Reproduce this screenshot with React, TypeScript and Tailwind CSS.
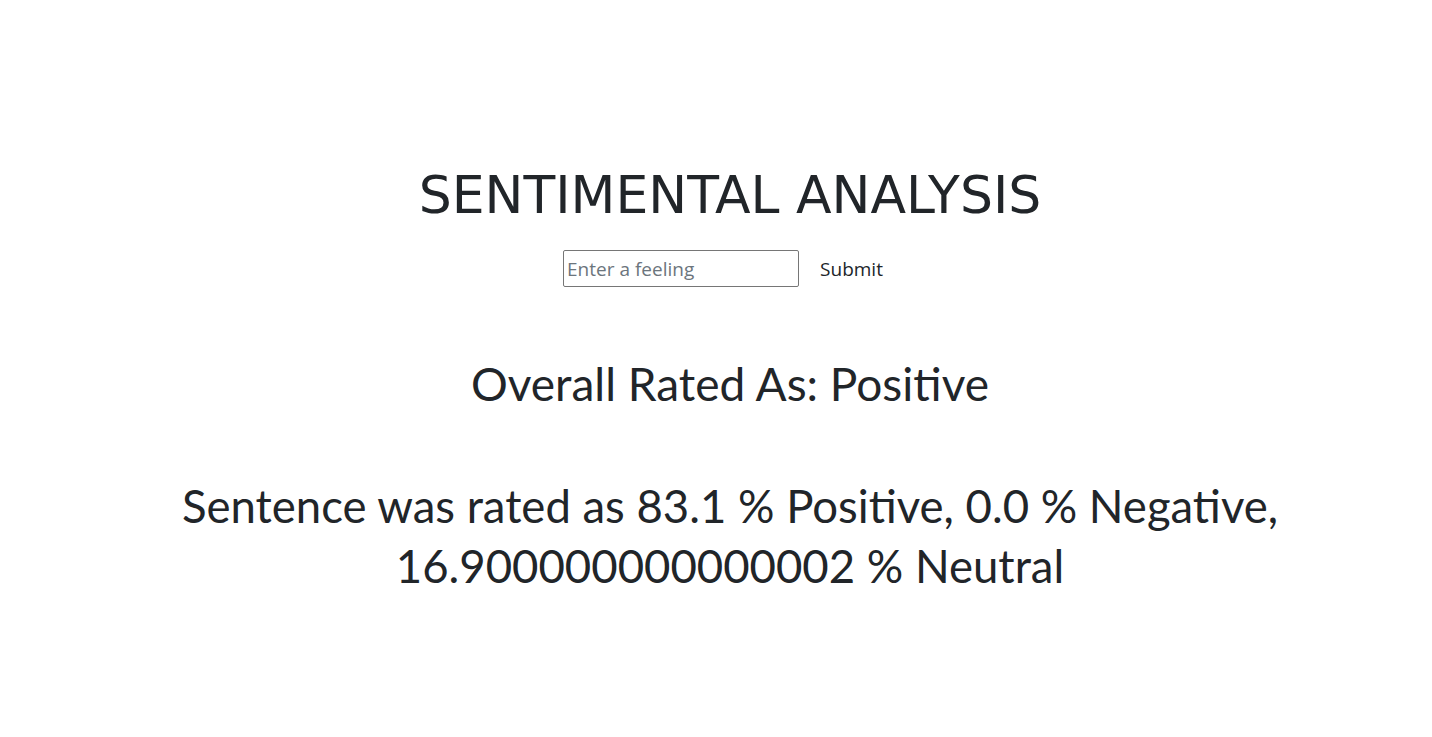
import React from "react";

const App = () => {
  return (
    <div className="min-h-screen bg-white text-[#212529] text-center pt-[164px] pl-[28px]">
      <h1 className="text-[52px] leading-[1.2] font-normal font-['Verdana','DejaVu_Sans',sans-serif]">
        SENTIMENTAL ANALYSIS
      </h1>
      <form className="flex justify-center items-center mt-[24px]" onSubmit={(e) => e.preventDefault()}>
        <input
          type="text"
          placeholder="Enter a feeling"
          className="w-[236px] h-[37px] border border-[#767676] rounded-[2px] px-[3px] text-[19px] placeholder:text-[#6c757d] outline-none font-['Open_Sans',sans-serif]"
        />
        <button
          type="submit"
          className="ml-[13px] pl-[8px] pr-[14px] text-[19px] text-[#212529] bg-transparent font-['Open_Sans',sans-serif]"
        >
          Submit
        </button>
      </form>
      <h2 className="mt-[69px] text-[46px] leading-[1.2] font-['Lato',sans-serif]">
        Overall Rated As: Positive
      </h2>
      <h2 className="mt-[64px] text-[45.5px] leading-[60px] max-w-[1150px] mx-auto font-['Lato',sans-serif]">
        Sentence was rated as 83.1 % Positive, 0.0 % Negative, 16.900000000000002 % Neutral
      </h2>
    </div>
  );
};

export default App;
